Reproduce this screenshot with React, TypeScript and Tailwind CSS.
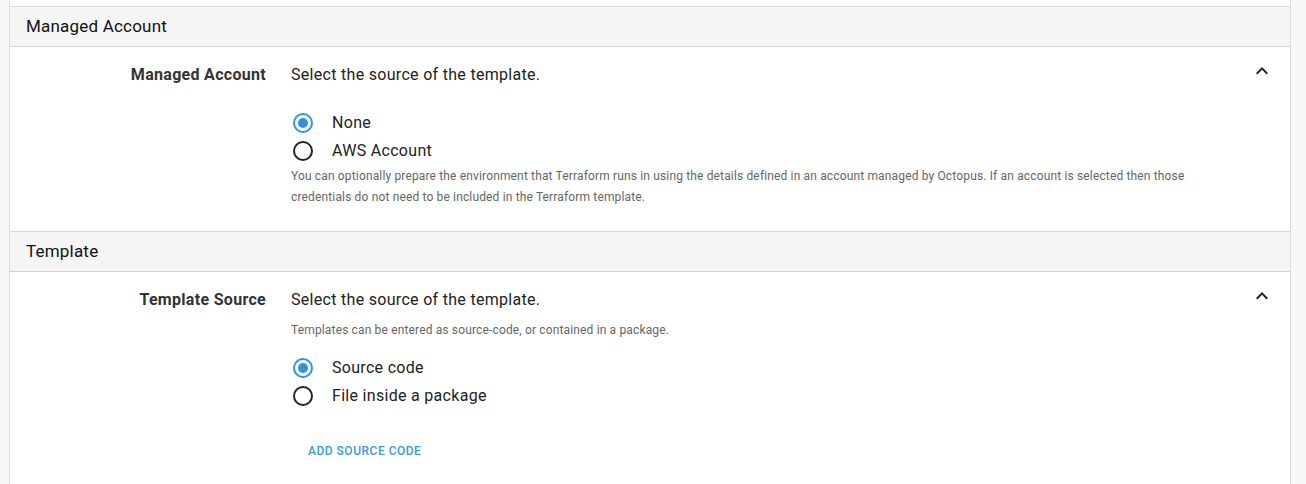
import React from 'react';

const FONT = { fontFamily: 'Roboto, "Noto Sans", sans-serif' };

function Radio({ label, checked }: { label: string; checked?: boolean }) {
  return (
    <label className="flex h-[28px] items-center cursor-pointer">
      <span className="flex h-6 w-6 items-center justify-center">
        <span
          className={
            checked
              ? 'flex h-5 w-5 items-center justify-center rounded-full border-2 border-[#2f93e0]'
              : 'flex h-5 w-5 items-center justify-center rounded-full border-2 border-[#222]'
          }
        >
          {checked && <span className="h-[10px] w-[10px] rounded-full bg-[#2f93e0]" />}
        </span>
      </span>
      <span className="ml-[17px] text-[16px] tracking-[0.3px] text-[#222]">{label}</span>
    </label>
  );
}

function Chevron() {
  return (
    <button className="mr-4 mt-[-4px] h-6 w-6 shrink-0 text-[#222]">
      <svg viewBox="0 0 24 24" width="24" height="24" fill="currentColor">
        <path d="M12 8l-6 6 1.41 1.41L12 10.83l4.59 4.58L18 14z" />
      </svg>
    </button>
  );
}

function SectionHeader({ title }: { title: string }) {
  return (
    <div className="flex h-[41px] items-center border-y border-[#d4d4d4] bg-[#f5f5f5] px-4 text-[17px] tracking-[0.2px] text-[#111]">
      {title}
    </div>
  );
}

function Row({ label, children }: { label: string; children: React.ReactNode }) {
  return (
    <div className="flex pt-[16px]">
      <div className="w-[256px] shrink-0 text-right text-[16px] font-bold leading-6 tracking-[0.3px] text-[#333]">{label}</div>
      <div className="ml-[25px] flex-1">{children}</div>
      <Chevron />
    </div>
  );
}

export default function App() {
  return (
    <div className="flex h-screen overflow-hidden bg-[#f8f8f8]" style={FONT}>
      <div className="ml-[9px] w-[1282px] shrink-0 border-x border-[#dcdcdc] bg-white">
        <div className="h-[6px]" />
        <SectionHeader title="Managed Account" />
        <div className="pb-[23px]">
          <Row label="Managed Account">
            <div className="text-[16px] leading-6 tracking-[0.3px] text-[#222]">Select the source of the template.</div>
            <div className="mt-[22px]">
              <Radio label="None" checked />
              <Radio label="AWS Account" />
            </div>
            <p className="mt-px max-w-[920px] text-[12px] leading-[21px] tracking-[0.15px] text-[#666]">
              You can optionally prepare the environment that Terraform runs in using the details defined in an account managed by Octopus. If an account is selected then those credentials do not need to be included in the Terraform template.
            </p>
          </Row>
        </div>
        <SectionHeader title="Template" />
        <div>
          <Row label="Template Source">
            <div className="text-[16px] leading-6 tracking-[0.3px] text-[#222]">Select the source of the template.</div>
            <p className="mt-[8px] text-[12px] leading-5 tracking-[0.15px] text-[#666]">
              Templates can be entered as source-code, or contained in a package.
            </p>
            <div className="mt-[14px]">
              <Radio label="Source code" checked />
              <Radio label="File inside a package" />
            </div>
            <button className="mt-[23px] h-9 rounded pl-[17px] pr-4 text-[12px] font-medium uppercase tracking-[0.5px] text-[#3a9ae2]">
              Add source code
            </button>
          </Row>
        </div>
      </div>
    </div>
  );
}
